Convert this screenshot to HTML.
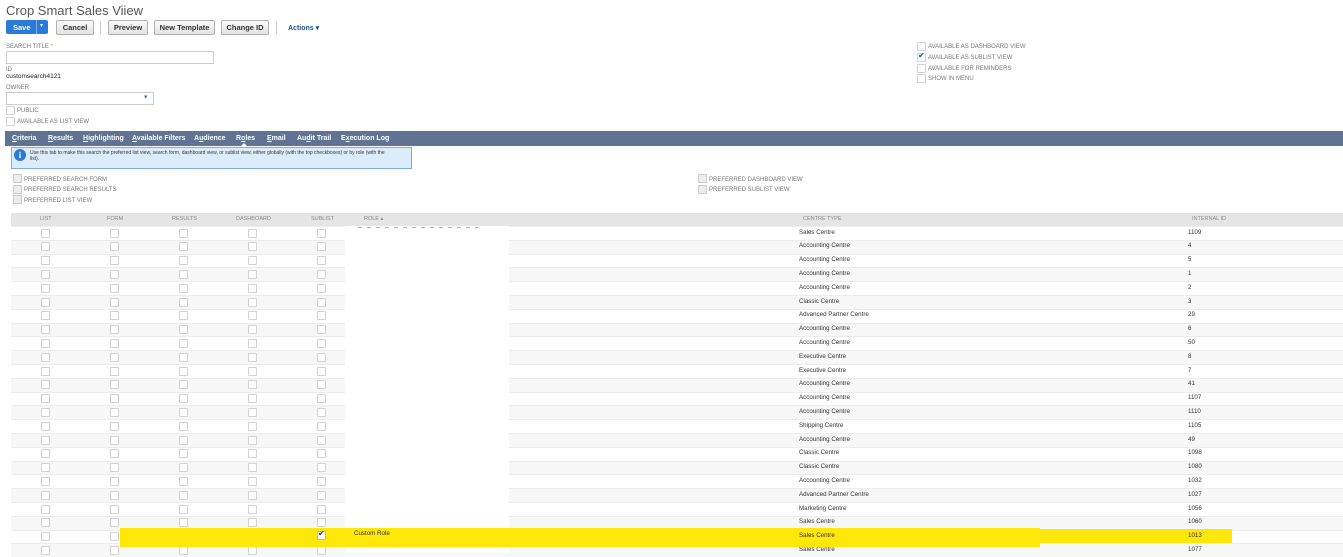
<!DOCTYPE html>
<html><head><meta charset="utf-8">
<style>
body{margin:0;width:1343px;height:553px;overflow:hidden;background:#fff;font-family:"Liberation Sans",Arial,sans-serif;position:relative;}
.a{position:absolute;white-space:nowrap}
.btn{position:absolute;top:20px;height:13px;border:1px solid #b0b0b0;border-radius:2px;background:linear-gradient(#fafafa,#e3e3e3);font-size:7.5px;font-weight:bold;color:#333;text-align:center;line-height:13px}
.lbl{font-size:6px;color:#777}
.cb{position:absolute;width:7px;height:7px;border:1px solid #d2d2d2;background:#fff;border-radius:1px}
.cbg{position:absolute;width:7px;height:7px;border:1px solid #ccc;background:#ececec}
.tab{position:absolute;top:135px;font-size:7px;color:#fff;font-weight:bold}
.tab u{text-decoration-thickness:0.5px}
.row{position:absolute;left:11px;width:1332px;height:13.8px;border-top:1px solid #ececec;box-sizing:border-box}
.t{position:absolute;font-size:6.2px;color:#333}
.h{position:absolute;top:216px;font-size:5.5px;color:#888}
</style></head><body>
<div class="a" style="left:6px;top:3px;font-size:13px;color:#555">Crop Smart Sales Viiew</div>
<div class="a" style="left:6px;top:20px;width:42px;height:14px;background:#2a7ad8;border-radius:2px;"></div>
<div class="a" style="left:13px;top:23px;font-size:7.5px;font-weight:bold;color:#fff">Save</div>
<div class="a" style="left:36px;top:20px;width:1px;height:14px;background:#7fb0ea"></div>
<div class="a" style="left:40px;top:22px;font-size:6px;color:#fff">▾</div>
<div class="btn" style="left:56px;width:36px">Cancel</div>
<div class="a" style="left:100px;top:21px;width:1px;height:13px;background:#ccc"></div>
<div class="btn" style="left:108px;width:38px">Preview</div>
<div class="btn" style="left:154px;width:59px">New Template</div>
<div class="btn" style="left:221px;width:46px">Change ID</div>
<div class="a" style="left:276px;top:21px;width:1px;height:13px;background:#ccc"></div>
<div class="a" style="left:288px;top:24px;font-size:7px;font-weight:bold;color:#24529a">Actions ▾</div>

<div class="a lbl" style="left:6px;top:44px">SEARCH TITLE <span style="color:#e09020">*</span></div>
<div class="a" style="left:6px;top:51px;width:206px;height:11px;border:1px solid #ccc"></div>
<div class="a lbl" style="left:6px;top:67px">ID</div>
<div class="a" style="left:6px;top:73px;font-size:6.5px;color:#222">customsearch4121</div>
<div class="a lbl" style="left:6px;top:85px">OWNER</div>
<div class="a" style="left:6px;top:92px;width:146px;height:11px;border:1px solid #ccc"></div>
<div class="a" style="left:144px;top:93px;font-size:7px;color:#4a6a9a">▾</div>
<div class="cb" style="left:6px;top:106px"></div><div class="a lbl" style="left:17px;top:108px">PUBLIC</div>
<div class="cb" style="left:6px;top:117px"></div><div class="a lbl" style="left:17px;top:119px">AVAILABLE AS LIST VIEW</div>

<div class="cb" style="left:917px;top:42px"></div><div class="a lbl" style="left:928px;top:44px">AVAILABLE AS DASHBOARD VIEW</div>
<div class="cb" style="left:917px;top:53px"></div><div class="a" style="left:918px;top:51px;font-size:8px;color:#24529a">✔</div><div class="a lbl" style="left:928px;top:55px">AVAILABLE AS SUBLIST VIEW</div>
<div class="cb" style="left:917px;top:64px"></div><div class="a lbl" style="left:928px;top:66px">AVAILABLE FOR REMINDERS</div>
<div class="cb" style="left:917px;top:74px"></div><div class="a lbl" style="left:928px;top:76px">SHOW IN MENU</div>

<div class="a" style="left:5px;top:131px;width:1338px;height:15px;background:#5f7393"></div>
<div class="tab" style="left:12px"><u>C</u>riteria</div>
<div class="tab" style="left:48px"><u>R</u>esults</div>
<div class="tab" style="left:83px"><u>H</u>ighlighting</div>
<div class="tab" style="left:132px"><u>A</u>vailable Filters</div>
<div class="tab" style="left:194px">A<u>u</u>dience</div>
<div class="tab" style="left:236px">R<u>o</u>les</div>
<div class="tab" style="left:267px"><u>E</u>mail</div>
<div class="tab" style="left:297px">Au<u>d</u>it Trail</div>
<div class="tab" style="left:341px">E<u>x</u>ecution Log</div>
<div class="a" style="left:241px;top:143px;width:0;height:0;border:3px solid transparent;border-bottom-color:#fff;border-top:0"></div>
<div class="a" style="left:11px;top:147px;width:399px;height:20px;background:#dcecfa;border:1px solid #7aaee0"></div>
<div class="a" style="left:14px;top:149px;width:12px;height:12px;border-radius:50%;background:#2a7ad8;color:#fff;font-size:9px;font-weight:bold;text-align:center;line-height:12px;font-family:'Liberation Serif',serif">i</div>
<div class="a" style="left:30px;top:150px;font-size:5px;color:#333;line-height:6px">Use this tab to make this search the preferred list view, search form, dashboard view, or sublist view, either globally (with the top checkboxes) or by role (with the<br>list).</div>

<div class="cbg" style="left:13px;top:174px"></div><div class="a lbl" style="left:24px;top:177px">PREFERRED SEARCH FORM</div>
<div class="cbg" style="left:13px;top:185px"></div><div class="a lbl" style="left:24px;top:187px">PREFERRED SEARCH RESULTS</div>
<div class="cbg" style="left:13px;top:195px"></div><div class="a lbl" style="left:24px;top:198px">PREFERRED LIST VIEW</div>
<div class="cbg" style="left:698px;top:174px"></div><div class="a lbl" style="left:709px;top:177px">PREFERRED DASHBOARD VIEW</div>
<div class="cbg" style="left:698px;top:185px"></div><div class="a lbl" style="left:709px;top:187px">PREFERRED SUBLIST VIEW</div>

<div class="a" style="left:11px;top:213px;width:1332px;height:13px;background:#e5e5e5"></div>
<div class="h" style="left:40px">LIST</div>
<div class="h" style="left:107px">FORM</div>
<div class="h" style="left:172px">RESULTS</div>
<div class="h" style="left:236px">DASHBOARD</div>
<div class="h" style="left:311px">SUBLIST</div>
<div class="h" style="left:364px">ROLE ▴</div>
<div class="h" style="left:803px">CENTRE TYPE</div>
<div class="h" style="left:1192px">INTERNAL ID</div>
<div id="rows"></div>
<script>
var d=[["Sales Centre","1109"],["Accounting Centre","4"],["Accounting Centre","5"],["Accounting Centre","1"],["Accounting Centre","2"],["Classic Centre","3"],["Advanced Partner Centre","29"],["Accounting Centre","6"],["Accounting Centre","50"],["Executive Centre","8"],["Executive Centre","7"],["Accounting Centre","41"],["Accounting Centre","1107"],["Accounting Centre","1110"],["Shipping Centre","1105"],["Accounting Centre","49"],["Classic Centre","1098"],["Classic Centre","1080"],["Accounting Centre","1032"],["Advanced Partner Centre","1027"],["Marketing Centre","1056"],["Sales Centre","1060"],["Sales Centre","1013"],["Sales Centre","1077"]];
var h="",xs=[41,110,179,248,317];
for(var i=0;i<d.length;i++){var y=226+i*13.8;
h+='<div class="row" style="top:'+y+'px;background:'+(i%2?'#f7f7f7':'#fff')+'"></div>';
for(var j=0;j<5;j++)h+='<div class="cb" style="left:'+xs[j]+'px;top:'+(y+2.5)+'px"></div>';
h+='<div class="t" style="left:799px;top:'+(y+2.5)+'px">'+d[i][0]+'</div><div class="t" style="left:1188px;top:'+(y+2.5)+'px">'+d[i][1]+'</div>';}
document.getElementById("rows").innerHTML=h;
</script>
<div class="a" style="left:345px;top:226px;width:164px;height:327px;background:#fff"></div>
<div class="a" style="left:358px;top:227px;width:120px;height:1px;background:repeating-linear-gradient(90deg,#aaa 0 4px,transparent 4px 9px)"></div>
<div class="a" style="left:120px;top:528px;width:920px;height:19px;background:#ffe600;opacity:0.96"></div>
<div class="a" style="left:1040px;top:529px;width:192px;height:14px;background:#ffe600;opacity:0.96"></div>
<div class="a" style="left:317px;top:531px;width:7px;height:7px;border:1px solid #bbb;background:#fff"></div>
<div class="a" style="left:318px;top:529px;font-size:8px;color:#333">✔</div>
<div class="t" style="left:354px;top:530px">Custom Role</div>
<div class="t" style="left:799px;top:532px">Sales Centre</div>
<div class="t" style="left:1188px;top:532px">1013</div>
</body></html>
